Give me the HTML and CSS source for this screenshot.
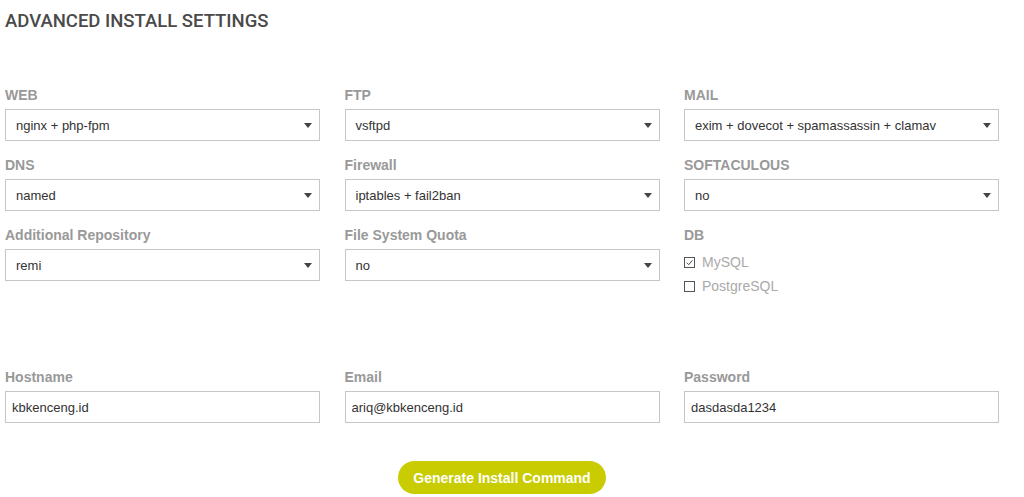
FILE: index.html
```html
<!DOCTYPE html>
<html>
<head>
<meta charset="utf-8">
<link rel="stylesheet" href="styles.css">
</head>
<body>
<div class="page">
  <h1 class="title">ADVANCED INSTALL SETTINGS</h1>
  <div class="grid">
    <div class="field">
      <label class="label">WEB</label>
      <div class="select"><span>nginx + php-fpm</span><i class="caret"></i></div>
    </div>
    <div class="field">
      <label class="label">FTP</label>
      <div class="select"><span>vsftpd</span><i class="caret"></i></div>
    </div>
    <div class="field">
      <label class="label">MAIL</label>
      <div class="select"><span>exim + dovecot + spamassassin + clamav</span><i class="caret"></i></div>
    </div>
    <div class="field">
      <label class="label">DNS</label>
      <div class="select"><span>named</span><i class="caret"></i></div>
    </div>
    <div class="field">
      <label class="label">Firewall</label>
      <div class="select"><span>iptables + fail2ban</span><i class="caret"></i></div>
    </div>
    <div class="field">
      <label class="label">SOFTACULOUS</label>
      <div class="select"><span>no</span><i class="caret"></i></div>
    </div>
    <div class="field">
      <label class="label">Additional Repository</label>
      <div class="select"><span>remi</span><i class="caret"></i></div>
    </div>
    <div class="field">
      <label class="label">File System Quota</label>
      <div class="select"><span>no</span><i class="caret"></i></div>
    </div>
    <div class="field">
      <label class="label">DB</label>
      <div class="checks">
        <div class="check"><span class="box"><svg viewBox="0 0 10 10" width="10" height="10"><path d="M2 5.2 L4.2 7.4 L8.2 2.6" fill="none" stroke="#444" stroke-width="1.1"/></svg></span><span class="check-text">MySQL</span></div>
        <div class="check"><span class="box"></span><span class="check-text">PostgreSQL</span></div>
      </div>
    </div>
  </div>
  <div class="grid grid-bottom">
    <div class="field">
      <label class="label">Hostname</label>
      <div class="input">kbkenceng.id</div>
    </div>
    <div class="field">
      <label class="label">Email</label>
      <div class="input">ariq@kbkenceng.id</div>
    </div>
    <div class="field">
      <label class="label">Password</label>
      <div class="input">dasdasda1234</div>
    </div>
  </div>
  <div class="actions">
    <button class="btn">Generate Install Command</button>
  </div>
</div>
</body>
</html>
```
FILE: styles.css
```css
html, body {
  margin: 0;
  padding: 0;
  background: #fff;
}
.page {
  padding: 10px 25px 0 5px;
  font-family: "Liberation Sans", Arial, sans-serif;
}
.title {
  margin: 0;
  font-family: Roboto, "Liberation Sans", sans-serif;
  font-weight: 500;
  font-size: 18.5px;
  line-height: 22px;
  color: #4a4a4a;
}
.grid {
  display: grid;
  grid-template-columns: 315px 315px 315px;
  column-gap: 24.5px;
  row-gap: 16px;
  margin-top: 55px;
}
.grid-bottom {
  margin-top: 75px;
}
.label {
  display: block;
  font-size: 14px;
  font-weight: bold;
  line-height: 16px;
  color: #999;
  margin-bottom: 6px;
}
.select, .input {
  box-sizing: border-box;
  height: 32px;
  border: 1px solid #c6c6c6;
  background: #fff;
  display: flex;
  align-items: center;
  font-size: 13px;
  color: #333;
}
.select {
  padding: 0 7px 0 10px;
}
.input {
  padding: 0 6px;
}
.select span {
  flex: 1;
}
.caret {
  width: 0;
  height: 0;
  border-left: 4px solid transparent;
  border-right: 4px solid transparent;
  border-top: 5px solid #444;
}
.checks {
  display: flex;
  flex-direction: column;
  gap: 8px;
  padding-top: 5px;
}
.check {
  display: flex;
  align-items: center;
  height: 16px;
}
.box {
  box-sizing: border-box;
  width: 11px;
  height: 11px;
  border: 1px solid #555;
  display: flex;
  align-items: center;
  justify-content: center;
  margin-right: 7px;
}
.box svg {
  display: block;
  width: 9px;
  height: 9px;
}
.check-text {
  font-size: 14px;
  color: #aaa;
}
.actions {
  display: flex;
  justify-content: center;
  margin-top: 38px;
}
.btn {
  width: 208px;
  height: 33px;
  border: none;
  border-radius: 17px;
  background: #c8cc00;
  color: #fff;
  font-family: "Liberation Sans", Arial, sans-serif;
  font-weight: bold;
  font-size: 14px;
  padding: 0;
}
```
